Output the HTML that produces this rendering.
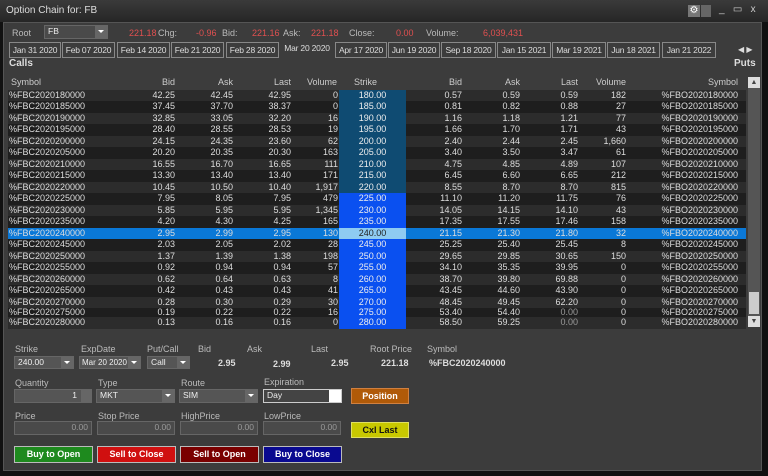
<!DOCTYPE html>
<html><head><meta charset="utf-8"><style>
*{margin:0;padding:0;box-sizing:border-box}
body{width:768px;height:476px;background:#111;font-family:"Liberation Sans",sans-serif;font-size:9px;color:#ddd;position:relative;overflow:hidden}
.a{position:absolute;white-space:nowrap}
#title{left:0;top:0;width:768px;height:22px;background:linear-gradient(#3a3a3a,#262626);}
#main{left:3px;top:22px;width:759px;height:449px;background:#3c3c3c;border:1px solid #555}
.red{color:#e05050}
.lbl{color:#bbb}
.tab{position:absolute;top:42px;height:16px;border:1px solid #888;background:#3c3c3c;color:#ddd;font-size:8.5px;line-height:14px;text-align:center;white-space:nowrap;overflow:hidden;letter-spacing:-0.2px}
.row{position:absolute;left:8px;width:738px;height:11.5px;line-height:11.5px;white-space:nowrap}
.row span{position:absolute;top:0}
.in{position:absolute;background:#555;border:1px solid #666;color:#eee;height:13px;line-height:11px;font-size:8.5px;padding-left:3px;white-space:nowrap;overflow:hidden}
.dd{position:absolute;right:0;top:0;width:12px;height:11px;background:#666}
.dd:after{content:"";position:absolute;left:3px;top:4px;border:3px solid transparent;border-top:3px solid #fff}
.btn{position:absolute;top:446px;height:17px;border:1px solid #bbb;color:#fff;font-weight:bold;font-size:9px;text-align:center;line-height:15px;white-space:nowrap}
</style></head><body>
<div class="a" id="title"></div>
<div class="a" style="left:6px;top:5px;font-size:10px;color:#ddd">Option Chain for: FB</div>
<div class="a" style="left:688px;top:5px;width:12px;height:12px;background:#777;color:#fff;font-size:10px;line-height:12px;text-align:center">⚙</div>
<div class="a" style="left:701px;top:5px;width:10px;height:12px;background:#666"></div>
<div class="a" style="left:719px;top:0;color:#ccc;font-size:10px;line-height:20px">_&nbsp;&nbsp;&nbsp;▭&nbsp;&nbsp;&nbsp;x</div>
<div class="a" id="main"></div>
<div class="a lbl" style="left:12px;top:28px">Root</div>
<div class="in" style="left:44px;top:25px;width:64px;height:14px;background:#4a4a4a">FB<div class="dd" style="height:12px"></div></div>
<div class="a red" style="left:129px;top:28px">221.18</div>
<div class="a lbl" style="left:158px;top:28px">Chg:</div>
<div class="a red" style="left:196px;top:28px">-0.96</div>
<div class="a lbl" style="left:222px;top:28px">Bid:</div>
<div class="a red" style="left:252px;top:28px">221.16</div>
<div class="a lbl" style="left:283px;top:28px">Ask:</div>
<div class="a red" style="left:311px;top:28px">221.18</div>
<div class="a lbl" style="left:349px;top:28px">Close:</div>
<div class="a red" style="left:396px;top:28px">0.00</div>
<div class="a lbl" style="left:426px;top:28px">Volume:</div>
<div class="a red" style="left:483px;top:28px">6,039,431</div>
<div class="tab" style="left:9px;width:52px">Jan 31 2020</div>
<div class="tab" style="left:62px;width:53px">Feb 07 2020</div>
<div class="tab" style="left:117px;width:53px">Feb 14 2020</div>
<div class="tab" style="left:171px;width:53px">Feb 21 2020</div>
<div class="tab" style="left:226px;width:53px">Feb 28 2020</div>
<div class="tab" style="left:280px;top:40px;height:18px;width:54px;border-color:#3c3c3c;border-bottom:none">Mar 20 2020</div>
<div class="tab" style="left:335px;width:52px">Apr 17 2020</div>
<div class="tab" style="left:388px;width:52px">Jun 19 2020</div>
<div class="tab" style="left:441px;width:55px">Sep 18 2020</div>
<div class="tab" style="left:497px;width:54px">Jan 15 2021</div>
<div class="tab" style="left:552px;width:54px">Mar 19 2021</div>
<div class="tab" style="left:607px;width:53px">Jun 18 2021</div>
<div class="tab" style="left:662px;width:54px">Jan 21 2022</div>
<div class="a" style="left:738px;top:45px;color:#ddd;font-size:8px">◀ ▶</div>
<div class="a" style="left:9px;top:58px;font-weight:bold;font-size:10px">Calls</div>
<div class="a" style="left:734px;top:58px;font-weight:bold;font-size:10px">Puts</div>
<div class="a" style="left:8px;top:76px;width:740px;height:12px;background:#3c3c3c"></div>
<div class="row" style="top:77px;color:#ccc"><span style="left:3px">Symbol</span><span style="right:571px">Bid</span><span style="right:513px">Ask</span><span style="right:455px">Last</span><span style="right:409px">Volume</span><span style="left:346px">Strike</span><span style="right:284px">Bid</span><span style="right:226px">Ask</span><span style="right:168px">Last</span><span style="right:120px">Volume</span><span style="right:8px">Symbol</span></div>
<div class="a" style="left:748px;top:77px;width:12px;height:250px;background:#555"></div>
<div class="a" style="left:748px;top:77px;width:12px;height:11px;background:#ddd;color:#444;font-size:7px;text-align:center;line-height:11px">▲</div>
<div class="a" style="left:749px;top:292px;width:10px;height:22px;background:#ccc"></div>
<div class="a" style="left:748px;top:316px;width:12px;height:11px;background:#ddd;color:#444;font-size:7px;text-align:center;line-height:11px">▼</div>
<div id="rows"></div>
<script>
var d=[[180,"42.25","42.45","42.95","0","0.57","0.59","0.59","182"],[185,"37.45","37.70","38.37","0","0.81","0.82","0.88","27"],[190,"32.85","33.05","32.20","16","1.16","1.18","1.21","77"],[195,"28.40","28.55","28.53","19","1.66","1.70","1.71","43"],[200,"24.15","24.35","23.60","62","2.40","2.44","2.45","1,660"],[205,"20.20","20.35","20.30","163","3.40","3.50","3.47","61"],[210,"16.55","16.70","16.65","111","4.75","4.85","4.89","107"],[215,"13.30","13.40","13.40","171","6.45","6.60","6.65","212"],[220,"10.45","10.50","10.40","1,917","8.55","8.70","8.70","815"],[225,"7.95","8.05","7.95","479","11.10","11.20","11.75","76"],[230,"5.85","5.95","5.95","1,345","14.05","14.15","14.10","43"],[235,"4.20","4.30","4.25","165","17.35","17.55","17.46","158"],[240,"2.95","2.99","2.95","130","21.15","21.30","21.80","32"],[245,"2.03","2.05","2.02","28","25.25","25.40","25.45","8"],[250,"1.37","1.39","1.38","198","29.65","29.85","30.65","150"],[255,"0.92","0.94","0.94","57","34.10","35.35","39.95","0"],[260,"0.62","0.64","0.63","8","38.70","39.80","69.88","0"],[265,"0.42","0.43","0.43","41","43.45","44.60","43.90","0"],[270,"0.28","0.30","0.29","30","48.45","49.45","62.20","0"],[275,"0.19","0.22","0.22","16","53.40","54.40","0.00","0"],[280,"0.13","0.16","0.16","0","58.50","59.25","0.00","0"]];
var h="",y=89.5;
d.forEach(function(r,i){
var sel=r[0]==240, hh=(r[0]==275)?9:11.5;
var bg=sel?"#0a78d7":(i%2?"#1e1e1e":"#2c2c2c");
var sb=sel?"#8ecbf2":(r[0]<=220?"#0f4b72":"#0a50f0");
var sc=sel?"#222":"#eee";
var g=function(v){return (v=="0.00"&&i>18)?'style="right:168px;color:#999"':'style="right:168px"'};
h+='<div class="row" style="top:'+y+'px;height:'+hh+'px;line-height:'+hh+'px;background:'+bg+'">'+
'<span style="left:1px">%FBC2020'+r[0]+'000</span>'+
'<span style="right:571px">'+r[1]+'</span><span style="right:513px">'+r[2]+'</span><span style="right:455px">'+r[3]+'</span><span style="right:408px">'+r[4]+'</span>'+
'<span style="left:331px;width:67px;height:100%;background:'+sb+';color:'+sc+';text-align:center">'+r[0]+'.00</span>'+
'<span style="right:284px">'+r[5]+'</span><span style="right:226px">'+r[6]+'</span><span '+g(r[7])+'>'+r[7]+'</span><span style="right:120px">'+r[8]+'</span>'+
'<span style="right:8px">%FBO2020'+r[0]+'000</span></div>';
y+=hh;});
document.getElementById("rows").innerHTML=h;
</script>
<div class="a lbl" style="left:15px;top:344px">Strike</div>
<div class="a lbl" style="left:81px;top:344px">ExpDate</div>
<div class="a lbl" style="left:147px;top:344px">Put/Call</div>
<div class="a lbl" style="left:198px;top:344px">Bid</div>
<div class="a lbl" style="left:247px;top:344px">Ask</div>
<div class="a lbl" style="left:311px;top:344px">Last</div>
<div class="a lbl" style="left:370px;top:344px">Root Price</div>
<div class="a lbl" style="left:427px;top:344px">Symbol</div>
<div class="in" style="left:14px;top:356px;width:60px">240.00<div class="dd"></div></div>
<div class="in" style="left:79px;top:356px;width:62px;font-size:8px;padding-left:2px">Mar 20 2020<div class="dd"></div></div>
<div class="in" style="left:147px;top:356px;width:43px">Call<div class="dd"></div></div>
<div class="a" style="left:218px;top:358px;font-weight:bold">2.95</div>
<div class="a" style="left:273px;top:359px;font-weight:bold">2.99</div>
<div class="a" style="left:331px;top:358px;font-weight:bold">2.95</div>
<div class="a" style="left:381px;top:358px;font-weight:bold">221.18</div>
<div class="a" style="left:429px;top:358px;font-weight:bold">%FBC2020240000</div>
<div class="a lbl" style="left:15px;top:378px">Quantity</div>
<div class="a lbl" style="left:98px;top:378px">Type</div>
<div class="a lbl" style="left:181px;top:378px">Route</div>
<div class="a lbl" style="left:264px;top:377px">Expiration</div>
<div class="in" style="left:14px;top:389px;width:78px;height:14px;text-align:right;padding-right:14px">1<div class="a" style="right:0;top:0;width:10px;height:12px;background:#666"></div></div>
<div class="in" style="left:96px;top:389px;width:79px;height:14px">MKT<div class="dd" style="height:12px"></div></div>
<div class="in" style="left:179px;top:389px;width:79px;height:14px">SIM<div class="dd" style="height:12px"></div></div>
<div class="in" style="left:263px;top:389px;width:79px;height:14px;background:#444;border-color:#ccc">Day<div class="dd" style="height:12px;background:#fff"></div></div>
<div class="a" style="left:351px;top:388px;width:58px;height:16px;background:#b05a08;border:1px solid #d08040;color:#fff;font-weight:bold;text-align:center;line-height:14px">Position</div>
<div class="a lbl" style="left:15px;top:411px">Price</div>
<div class="a lbl" style="left:98px;top:411px">Stop Price</div>
<div class="a lbl" style="left:181px;top:411px">HighPrice</div>
<div class="a lbl" style="left:264px;top:411px">LowPrice</div>
<div class="in" style="left:14px;top:421px;width:78px;height:14px;background:#4a4a4a;color:#999;text-align:right;padding-right:3px">0.00</div>
<div class="in" style="left:97px;top:421px;width:78px;height:14px;background:#4a4a4a;color:#999;text-align:right;padding-right:3px">0.00</div>
<div class="in" style="left:180px;top:421px;width:78px;height:14px;background:#4a4a4a;color:#999;text-align:right;padding-right:3px">0.00</div>
<div class="in" style="left:263px;top:421px;width:78px;height:14px;background:#4a4a4a;color:#999;text-align:right;padding-right:3px">0.00</div>
<div class="a" style="left:351px;top:422px;width:58px;height:16px;background:#c8c800;border:1px solid #e0e060;color:#111;font-weight:bold;text-align:center;line-height:14px">Cxl Last</div>
<div class="btn" style="left:14px;width:79px;background:#1e8a1e">Buy to Open</div>
<div class="btn" style="left:97px;width:79px;background:#d01010">Sell to Close</div>
<div class="btn" style="left:180px;width:79px;background:#7a0000">Sell to Open</div>
<div class="btn" style="left:263px;width:79px;background:#0a0a90">Buy to Close</div>
</body></html>
